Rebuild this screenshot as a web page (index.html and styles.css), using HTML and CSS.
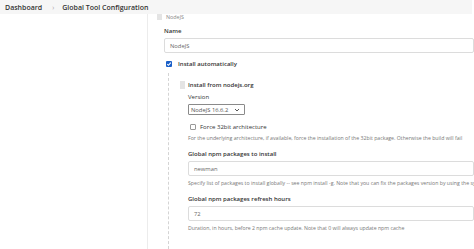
FILE: index.html
```html
<!DOCTYPE html>
<html lang="en">
  <head>
    <meta charset="UTF-8" />
    <title>Global Tool Configuration</title>
    <link rel="stylesheet" href="styles.css" />
  </head>
  <body>
    <div class="breadcrumbs">
      <span class="crumb">Dashboard</span>
      <span class="crumb-sep">›</span>
      <span class="crumb">Global Tool Configuration</span>
    </div>

    <div class="page">
      <div class="side-panel"></div>

      <div class="main-panel">
        <div class="section-head">
          <span class="handle"></span>
          <span class="section-title">NodeJS</span>
        </div>

        <div class="field name-field">
          <div class="label">Name</div>
          <div class="text-input">NodeJS</div>
        </div>

        <div class="check-row top-check">
          <span class="checkbox checked">
            <svg viewBox="0 0 6 6" width="6" height="6">
              <path d="M1.2 3.1 L2.5 4.3 L4.8 1.6" fill="none" stroke="#fff" stroke-width="1.1" />
            </svg>
          </span>
          <span class="check-label">Install automatically</span>
        </div>

        <div class="nested">
          <div class="inner-head">
            <span class="handle tall"></span>
            <span class="inner-title">Install from nodejs.org</span>
          </div>

          <div class="field">
            <div class="label light">Version</div>
            <div class="select">
              <span>NodeJS 16.6.2</span>
              <svg viewBox="0 0 6 4" width="6" height="4">
                <path d="M1 1 L3 3 L5 1" fill="none" stroke="#444" stroke-width="0.9" />
              </svg>
            </div>
          </div>

          <div class="check-row">
            <span class="checkbox"></span>
            <span class="check-label normal">Force 32bit architecture</span>
          </div>
          <div class="help">
            For the underlying architecture, if available, force the installation of the 32bit package. Otherwise the build will fail
          </div>

          <div class="field spaced">
            <div class="label">Global npm packages to install</div>
            <div class="text-input">newman</div>
            <div class="help">
              Specify list of packages to install globally -- see npm install -g. Note that you can fix the packages version by using the syntax
            </div>
          </div>

          <div class="field spaced">
            <div class="label">Global npm packages refresh hours</div>
            <div class="text-input">72</div>
            <div class="help">
              Duration, in hours, before 2 npm cache update. Note that 0 will always update npm cache
            </div>
          </div>
        </div>
      </div>
    </div>
  </body>
</html>
```

FILE: styles.css
```css
* {
  margin: 0;
  padding: 0;
  box-sizing: border-box;
}

body {
  width: 474px;
  height: 249px;
  overflow: hidden;
  background-color: #fff;
  color: #333;
  font-family: "Open Sans", "Noto Sans", sans-serif;
}

.breadcrumbs {
  display: flex;
  align-items: center;
  height: 14px;
  width: 472px;
  padding-left: 5px;
  background-color: #f6f6f6;
  font-size: 7px;
  font-weight: 600;
  color: #333;
}

.crumb-sep {
  margin: 0 8px 0 10px;
  font-weight: normal;
  color: #aaa;
}

.page {
  display: flex;
  height: 235px;
}

.side-panel {
  width: 148px;
  flex-shrink: 0;
  border-right: 1px solid #ececec;
}

.main-panel {
  display: flex;
  flex-direction: column;
  width: 326px;
  padding-left: 9px;
  overflow: hidden;
}

.section-head {
  display: flex;
  align-items: center;
  height: 6px;
}

.handle {
  width: 5px;
  height: 6px;
  background-color: #e4e4e4;
  margin-right: 4px;
}

.handle.tall {
  height: 8px;
  margin-right: 3px;
}

.section-title {
  font-size: 5.4px;
  color: #888;
}

.field {
  display: flex;
  flex-direction: column;
}

.name-field {
  padding-left: 7px;
  margin-top: 4px;
}

.label {
  font-size: 6px;
  font-weight: 600;
  line-height: 12px;
  color: #333;
  margin-top: 1px;
}

.label.light {
  font-weight: normal;
}

.text-input {
  height: 15px;
  display: flex;
  align-items: center;
  padding-left: 5px;
  border: 1px solid #dcdcdc;
  border-radius: 2px;
  font-size: 5.8px;
  color: #666;
  margin-top: 1px;
}

.check-row {
  display: flex;
  align-items: center;
  height: 12px;
}

.top-check {
  margin-top: 5px;
  padding-left: 9px;
}

.checkbox {
  display: flex;
  align-items: center;
  justify-content: center;
  width: 6px;
  height: 6px;
  border: 1px solid #999;
  border-radius: 1px;
  background-color: #fff;
  margin-right: 6px;
}

.checkbox.checked {
  border: none;
  background-color: #1a5fc8;
}

.check-label {
  font-size: 6px;
  font-weight: 600;
}

.check-label.normal {
  font-weight: normal;
}

.nested {
  flex: 1;
  margin-left: 11px;
  margin-top: 3px;
  padding-left: 11px;
  padding-top: 7px;
  border-left: 1px dashed #d4d4d4;
}

.inner-head {
  display: flex;
  align-items: center;
  height: 10px;
}

.inner-title {
  font-size: 6px;
  font-weight: 600;
}

.nested .field {
  padding-left: 8px;
}

.nested .field.spaced {
  margin-top: 4px;
}

.select {
  display: flex;
  align-items: center;
  justify-content: space-between;
  width: 57px;
  height: 11px;
  padding: 0 4px 0 2px;
  margin-top: 1px;
  border: 1px solid #8a8a8a;
  border-radius: 1px;
  font-size: 5.8px;
  color: #555;
}

.nested .check-row {
  margin-top: 6px;
  padding-left: 10px;
}

.nested .check-row .checkbox {
  margin-right: 4px;
}

.help {
  font-size: 5.2px;
  color: #777;
  white-space: nowrap;
  line-height: 10px;
  padding-left: 8px;
}

.nested .field .help {
  padding-left: 0;
  margin-top: 2px;
}
```
